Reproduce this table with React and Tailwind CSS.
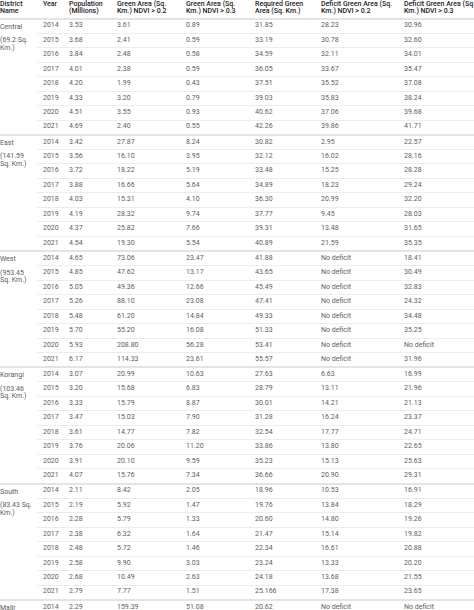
import React from 'react';

const groups = [
  {
    name: 'Central',
    area: '(69.2 Sq. Km.)',
    rows: [
      ['2014', '3.53', '3.61', '0.89', '31.85', '28.23', '30.96'],
      ['2015', '3.68', '2.41', '0.59', '33.19', '30.78', '32.60'],
      ['2016', '3.84', '2.48', '0.58', '34.59', '32.11', '34.01'],
      ['2017', '4.01', '2.38', '0.59', '36.05', '33.67', '35.47'],
      ['2018', '4.20', '1.99', '0.43', '37.51', '35.52', '37.08'],
      ['2019', '4.33', '3.20', '0.79', '39.03', '35.83', '38.24'],
      ['2020', '4.51', '3.55', '0.93', '40.62', '37.06', '39.68'],
      ['2021', '4.69', '2.40', '0.55', '42.26', '39.86', '41.71'],
    ],
  },
  {
    name: 'East',
    area: '(141.59 Sq. Km.)',
    rows: [
      ['2014', '3.42', '27.87', '8.24', '30.82', '2.95', '22.57'],
      ['2015', '3.56', '16.10', '3.95', '32.12', '16.02', '28.16'],
      ['2016', '3.72', '18.22', '5.19', '33.48', '15.25', '28.28'],
      ['2017', '3.88', '16.66', '5.64', '34.89', '18.23', '29.24'],
      ['2018', '4.03', '15.31', '4.10', '36.30', '20.99', '32.20'],
      ['2019', '4.19', '28.32', '9.74', '37.77', '9.45', '28.03'],
      ['2020', '4.37', '25.82', '7.66', '39.31', '13.48', '31.65'],
      ['2021', '4.54', '19.30', '5.54', '40.89', '21.59', '35.35'],
    ],
  },
  {
    name: 'West',
    area: '(953.45 Sq. Km.)',
    rows: [
      ['2014', '4.65', '73.06', '23.47', '41.88', 'No deficit', '18.41'],
      ['2015', '4.85', '47.62', '13.17', '43.65', 'No deficit', '30.49'],
      ['2016', '5.05', '49.36', '12.66', '45.49', 'No deficit', '32.83'],
      ['2017', '5.26', '88.10', '23.08', '47.41', 'No deficit', '24.32'],
      ['2018', '5.48', '61.20', '14.84', '49.33', 'No deficit', '34.48'],
      ['2019', '5.70', '55.20', '16.08', '51.33', 'No deficit', '35.25'],
      ['2020', '5.93', '208.80', '56.28', '53.41', 'No deficit', 'No deficit'],
      ['2021', '6.17', '114.33', '23.61', '55.57', 'No deficit', '31.96'],
    ],
  },
  {
    name: 'Korangi',
    area: '(103.46 Sq. Km.)',
    rows: [
      ['2014', '3.07', '20.99', '10.63', '27.63', '6.63', '16.99'],
      ['2015', '3.20', '15.68', '6.83', '28.79', '13.11', '21.96'],
      ['2016', '3.33', '15.79', '8.87', '30.01', '14.21', '21.13'],
      ['2017', '3.47', '15.03', '7.90', '31.28', '16.24', '23.37'],
      ['2018', '3.61', '14.77', '7.82', '32.54', '17.77', '24.71'],
      ['2019', '3.76', '20.06', '11.20', '33.86', '13.80', '22.65'],
      ['2020', '3.91', '20.10', '9.59', '35.23', '15.13', '25.63'],
      ['2021', '4.07', '15.76', '7.34', '36.66', '20.90', '29.31'],
    ],
  },
  {
    name: 'South',
    area: '(83.43 Sq. Km.)',
    rows: [
      ['2014', '2.11', '8.42', '2.05', '18.96', '10.53', '16.91'],
      ['2015', '2.19', '5.92', '1.47', '19.76', '13.84', '18.29'],
      ['2016', '2.28', '5.79', '1.33', '20.60', '14.80', '19.26'],
      ['2017', '2.38', '6.32', '1.64', '21.47', '15.14', '19.82'],
      ['2018', '2.48', '5.72', '1.46', '22.34', '16.61', '20.88'],
      ['2019', '2.58', '9.90', '3.03', '23.24', '13.33', '20.20'],
      ['2020', '2.68', '10.49', '2.63', '24.18', '13.68', '21.55'],
      ['2021', '2.79', '7.77', '1.51', '25.166', '17.38', '23.65'],
    ],
  },
  {
    name: 'Malir',
    area: '',
    rows: [['2014', '2.29', '159.39', '51.08', '20.62', 'No deficit', 'No deficit']],
  },
];

const headers = [
  'District Name',
  'Year',
  'Population (Millions)',
  'Green Area (Sq. Km.) NDVI > 0.2',
  'Green Area (Sq. Km.) NDVI > 0.3',
  'Required Green Area (Sq. Km.)',
  'Deficit Green Area (Sq. Km.) NDVI > 0.2',
  'Deficit Green Area (Sq. Km.) NDVI > 0.3',
];

const App = () => {
  return (
    <div className="w-[474px] h-[610px] overflow-hidden bg-white font-['Roboto','Liberation_Sans',sans-serif] text-[7px]">
      <table className="table-fixed border-collapse w-[481px]">
        <colgroup>
          <col className="w-[37px]" />
          <col className="w-[26px]" />
          <col className="w-[48px]" />
          <col className="w-[69px]" />
          <col className="w-[69px]" />
          <col className="w-[66px]" />
          <col className="w-[83px]" />
          <col className="w-[83px]" />
        </colgroup>
        <thead>
          <tr className="border-b border-[#dcdcdc]">
            {headers.map((h, i) => (
              <th
                key={i}
                className={`h-[18.5px] align-top text-left font-medium text-[#1c1c1c] leading-[6.8px] pt-[1px] ${
                  i === 0 ? 'pl-0 pr-[4px]' : 'pl-[6px] pr-0'
                }`}
              >
                {h}
              </th>
            ))}
          </tr>
        </thead>
        {groups.map((g) => (
          <tbody key={g.name} className="border-t-2 border-[#e4e4e4]">
            {g.rows.map((r, ri) => (
              <tr key={ri} className="border-b border-[#ededed]">
                {ri === 0 && (
                  <td
                    rowSpan={g.rows.length}
                    className="align-top pl-0 pr-[4px] pt-[4px] text-[#5a5a5a] leading-[7.5px]"
                  >
                    <p>{g.name}</p>
                    {g.area && <p className="mt-[6px]">{g.area}</p>}
                  </td>
                )}
                {r.map((c, ci) => (
                  <td
                    key={ci}
                    className="h-[14.54px] align-middle pl-[6px] text-[#606060] leading-[7.5px] whitespace-nowrap"
                  >
                    {c}
                  </td>
                ))}
              </tr>
            ))}
          </tbody>
        ))}
      </table>
    </div>
  );
};

export default App;
